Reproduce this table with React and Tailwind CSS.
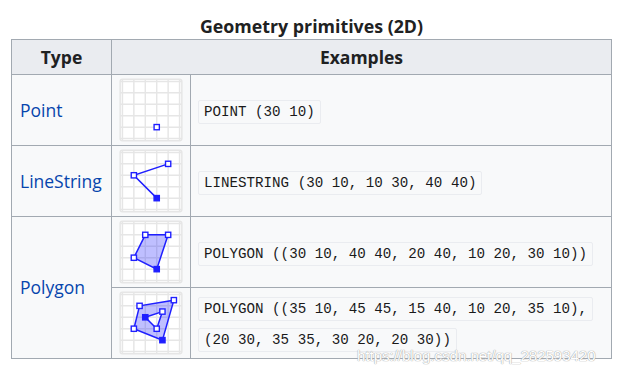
const BLUE = '#1f1fff';

function Grid({ children }) {
  const lines = [0, 10, 20, 30, 40, 50];
  return (
    <svg width="64" height="64" viewBox="-3 -3 56 56" className="block">
      <rect x="-2" y="-2" width="54" height="54" rx="2" fill="#ffffff" stroke="#e6e6e6" strokeWidth="1.3" />
      {lines.map((v) => (
        <g key={v}>
          <line x1={v} y1="-2" x2={v} y2="52" stroke="#e6e6e6" strokeWidth="1.3" />
          <line x1="-2" y1={v} x2="52" y2={v} stroke="#e6e6e6" strokeWidth="1.3" />
        </g>
      ))}
      {children}
    </svg>
  );
}

function Marker({ x, y, filled }) {
  return (
    <rect
      x={x - 2.3}
      y={y - 2.3}
      width="4.6"
      height="4.6"
      fill={filled ? BLUE : '#ffffff'}
      stroke={BLUE}
      strokeWidth="1.2"
    />
  );
}

function PointImg() {
  return (
    <Grid>
      <Marker x={30} y={40} />
    </Grid>
  );
}

function LineImg() {
  return (
    <Grid>
      <polyline points="30,40 10,20 40,10" fill="none" stroke={BLUE} strokeWidth="1.3" />
      <Marker x={30} y={40} filled />
      <Marker x={10} y={20} />
      <Marker x={40} y={10} />
    </Grid>
  );
}

function PolyImg() {
  return (
    <Grid>
      <polygon points="30,40 40,10 20,10 10,30" fill="#0000ff" fillOpacity="0.25" stroke={BLUE} strokeWidth="1.3" />
      <Marker x={30} y={40} filled />
      <Marker x={40} y={10} />
      <Marker x={20} y={10} />
      <Marker x={10} y={30} />
    </Grid>
  );
}

function HoleImg() {
  return (
    <Grid>
      <path
        d="M35 40 L45 5 L15 10 L10 30 Z M20 20 L35 15 L30 30 Z"
        fill="#0000ff"
        fillOpacity="0.25"
        fillRule="evenodd"
        stroke={BLUE}
        strokeWidth="1.3"
      />
      <Marker x={35} y={40} filled />
      <Marker x={45} y={5} />
      <Marker x={15} y={10} />
      <Marker x={10} y={30} />
      <Marker x={20} y={20} filled />
      <Marker x={35} y={15} />
      <Marker x={30} y={30} />
    </Grid>
  );
}

function Code({ children }) {
  return (
    <code className="font-['Liberation_Mono',monospace] text-[14.2px] text-[#1a1a1a] bg-[#f8f9fa] border border-[#eaecf0] rounded-[2px] px-[5px] py-[3px] whitespace-pre [box-decoration-break:clone]">
      {children}
    </code>
  );
}

const td = 'border border-[#a2a9b1] bg-[#f8f9fa] align-middle';

export default function App() {
  return (
    <div className="w-[624px] h-[369px] bg-white relative font-['Open_Sans',sans-serif] text-[#202122] overflow-hidden">
      <div className="pt-[14px] pl-[11px]">
        <table className="table-fixed border-collapse w-[601px]">
          <caption className="font-bold text-[17.8px] h-[25px] leading-[25px] text-[#202122]">
            Geometry primitives (2D)
          </caption>
          <colgroup>
            <col className="w-[100px]" />
            <col className="w-[79px]" />
            <col />
          </colgroup>
          <thead>
            <tr className="h-[35px]">
              <th className="border border-[#a2a9b1] bg-[#eaecf0] font-bold text-[17.5px]">Type</th>
              <th colSpan={2} className="border border-[#a2a9b1] bg-[#eaecf0] font-bold text-[17.5px]">
                Examples
              </th>
            </tr>
          </thead>
          <tbody className="text-[17.5px]">
            <tr className="h-[71px]">
              <td className={`${td} pl-[8px] text-[#0645ad]`}>Point</td>
              <td className={`${td} px-[7px]`}><PointImg /></td>
              <td className={`${td} px-[7px]`}><Code>POINT (30 10)</Code></td>
            </tr>
            <tr className="h-[71px]">
              <td className={`${td} pl-[8px] text-[#0645ad]`}>LineString</td>
              <td className={`${td} px-[7px]`}><LineImg /></td>
              <td className={`${td} px-[7px]`}><Code>LINESTRING (30 10, 10 30, 40 40)</Code></td>
            </tr>
            <tr className="h-[71px]">
              <td rowSpan={2} className={`${td} pl-[8px] text-[#0645ad]`}>Polygon</td>
              <td className={`${td} px-[7px]`}><PolyImg /></td>
              <td className={`${td} px-[7px]`}><Code>POLYGON ((30 10, 40 40, 20 40, 10 20, 30 10))</Code></td>
            </tr>
            <tr className="h-[71px]">
              <td className={`${td} px-[7px]`}><HoleImg /></td>
              <td className={`${td} px-[7px] leading-[28px]`}>
                <Code>POLYGON ((35 10, 45 45, 15 40, 10 20, 35 10),</Code>
                <br />
                <Code>(20 30, 35 35, 30 20, 20 30))</Code>
              </td>
            </tr>
          </tbody>
        </table>
      </div>
      <div className="absolute left-[357px] top-[345px] text-[15px] text-white font-['Liberation_Sans',sans-serif] [text-shadow:0_0_1px_#a0a0a0,0_0_1px_#a0a0a0]">
        https://blog.csdn.net/qq_282593420
      </div>
    </div>
  );
}
